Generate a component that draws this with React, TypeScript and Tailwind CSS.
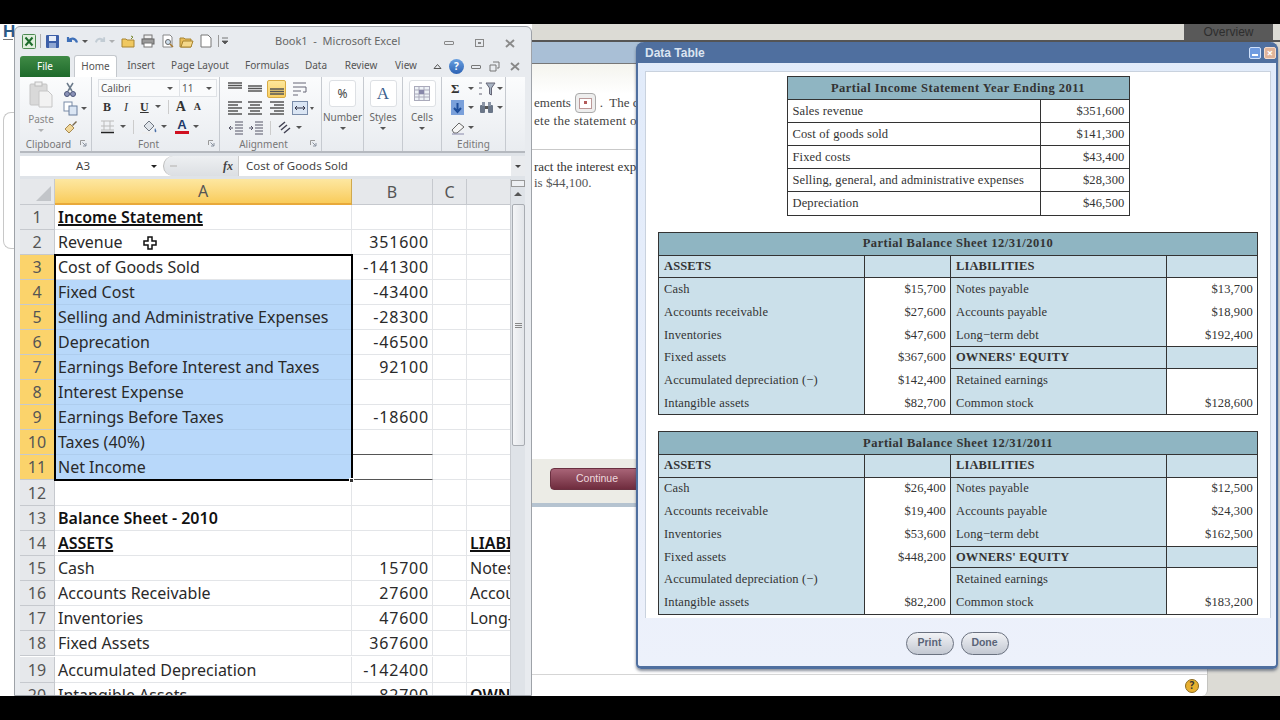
import { ReactNode } from 'react'

const xlFont = "[font-family:'Noto_Sans',sans-serif]"

const rows = [
  { n: 1, a: 'Income Statement', bold: true, under: true },
  { n: 2, a: 'Revenue', b: '351600' },
  { n: 3, a: 'Cost of Goods Sold', b: '-141300', active: true },
  { n: 4, a: 'Fixed Cost', b: '-43400', sel: true },
  { n: 5, a: 'Selling and Administrative Expenses', b: '-28300', sel: true },
  { n: 6, a: 'Deprecation', b: '-46500', sel: true },
  { n: 7, a: 'Earnings Before Interest and Taxes', b: '92100', sel: true },
  { n: 8, a: 'Interest Expense', sel: true },
  { n: 9, a: 'Earnings Before Taxes', b: '-18600', sel: true },
  { n: 10, a: 'Taxes (40%)', sel: true },
  { n: 11, a: 'Net Income', sel: true, boxB: true },
  { n: 12, tall: true },
  { n: 13, a: 'Balance Sheet - 2010', bold: true },
  { n: 14, a: 'ASSETS', bold: true, under: true, d: 'LIABI', dBold: true },
  { n: 15, a: 'Cash', b: '15700', d: 'Notes' },
  { n: 16, a: 'Accounts Receivable', b: '27600', d: 'Accou' },
  { n: 17, a: 'Inventories', b: '47600', d: 'Long-' },
  { n: 18, a: 'Fixed Assets', b: '367600' },
  { n: 19, a: 'Accumulated Depreciation', b: '-142400', taller: true },
  { n: 20, a: 'Intangible Assets', b: '82700', d: 'OWN', dBold: true },
] as {
  n: number
  a?: string
  b?: string
  d?: string
  bold?: boolean
  under?: boolean
  sel?: boolean
  active?: boolean
  boxB?: boolean
  dBold?: boolean
  tall?: boolean
  taller?: boolean
}[]

function Caret({ className = '' }: { className?: string }) {
  return <span className={`inline-block w-0 h-0 border-x-[3px] border-x-transparent border-t-[3px] border-t-[#555] ${className}`} />
}

function Lines({ kind }: { kind: 'top' | 'mid' | 'bot' | 'l' | 'c' | 'r' }) {
  const paths = {
    top: 'M1 2h14M1 4.5h14M1 7h14',
    mid: 'M1 5h14M1 7.5h14M1 10h14',
    bot: 'M1 8h14M1 10.5h14M1 13h14',
    l: 'M1 2h14M1 5h10M1 8h14M1 11h10M1 14h14',
    c: 'M1 2h14M3 5h10M1 8h14M3 11h10M1 14h14',
    r: 'M1 2h14M5 5h10M1 8h14M5 11h10M1 14h14',
  }
  return (
    <svg width="16" height="16" viewBox="0 0 16 16">
      <path d={paths[kind]} stroke="#555" strokeWidth="1.3" fill="none" />
    </svg>
  )
}

function Cell({ className = '', children }: { className?: string; children?: ReactNode }) {
  return <div className={`flex items-center overflow-hidden whitespace-nowrap ${className}`}>{children}</div>
}

function ExcelTitle() {
  return (
    <div className="h-[28px] flex items-center pl-[7px] relative text-[#666]">
      <svg width="14" height="15" viewBox="0 0 14 15">
        <rect x=".5" y=".5" width="13" height="14" rx="1" fill="#dfeedd" stroke="#4d8a52" />
        <path d="M3.5 3.5l7 8M10.5 3.5l-7 8" stroke="#1d6b2c" strokeWidth="2" />
      </svg>
      <span className="w-px h-[14px] bg-[#b0b0b0] ml-[4px] mr-[5px]" />
      <svg width="13" height="13" viewBox="0 0 13 13">
        <rect width="13" height="13" rx="1" fill="#3d5fa8" />
        <rect x="3" y="1" width="7" height="5" fill="#e8eef8" />
        <rect x="3" y="8" width="7" height="5" fill="#8fa6d2" />
      </svg>
      <svg className="ml-[7px]" width="13" height="12" viewBox="0 0 13 12">
        <path d="M2 2v4h4M2.500 6c2-3.500 7-3.500 8.500 1.500" stroke="#3d6fb8" strokeWidth="2.200" fill="none" />
      </svg>
      <Caret className="ml-[3px]" />
      <svg className="ml-[6px]" width="12" height="12" viewBox="0 0 13 12">
        <path d="M11 2v4H7M10.500 6c-2-3.500-7-3.500-8.500 1.500" stroke="#c2ccd4" strokeWidth="2" fill="none" />
      </svg>
      <Caret className="ml-[3px] opacity-40" />
      <svg className="ml-[6px]" width="14" height="13" viewBox="0 0 14 13">
        <path d="M1 4h4l1 1h7v7H1z" fill="#f0c860" stroke="#a88430" />
        <path d="M10 1l2 1-2 2" stroke="#7a8a30" fill="none" />
      </svg>
      <svg className="ml-[6px]" width="14" height="14" viewBox="0 0 14 14">
        <rect x="3" y="1" width="8" height="4" fill="#eee" stroke="#777" />
        <rect x="1" y="5" width="12" height="5" fill="#9a9a9a" stroke="#666" />
        <rect x="3" y="9" width="8" height="4" fill="#fff" stroke="#777" />
      </svg>
      <svg className="ml-[6px]" width="14" height="14" viewBox="0 0 14 14">
        <path d="M2 1h7l2 2v10H2z" fill="#fff" stroke="#888" />
        <circle cx="7" cy="8" r="2.500" fill="#cfe0ee" stroke="#666" />
        <path d="M9 10l3 3" stroke="#a87a30" strokeWidth="1.500" />
      </svg>
      <svg className="ml-[4px]" width="15" height="13" viewBox="0 0 15 13">
        <path d="M1 3h4l1 1h6v8H1z" fill="#e8bc58" stroke="#a88430" />
        <path d="M4 6h10l-2 6H2z" fill="#f5d88a" stroke="#a88430" />
      </svg>
      <svg className="ml-[6px]" width="12" height="14" viewBox="0 0 12 14">
        <path d="M1 1h7l3 3v9H1z" fill="#fff" stroke="#777" />
      </svg>
      <span className="w-px h-[12px] bg-[#999] ml-[6px] mr-[3px]" />
      <svg width="6" height="8" viewBox="0 0 6 8">
        <path d="M0 1h6M0 4h6l-3 3z" stroke="#555" fill="#555" strokeWidth=".8" />
      </svg>
      <span className="ml-[47px] text-[11px] whitespace-nowrap">Book1 &nbsp;-&nbsp; Microsoft Excel</span>
      <div className="ml-auto flex items-center gap-[21px] pr-[16px] pt-[4px]">
        <span className="w-[10px] h-[4px] border border-[#888] rounded-[1px]" />
        <span className="w-[9px] h-[8px] border border-[#888] flex items-center justify-center">
          <span className="w-[3px] h-[2px] border border-[#888]" />
        </span>
        <svg width="10" height="9" viewBox="0 0 10 9">
          <path d="M1 1l8 7M9 1L1 8" stroke="#8b8b8b" strokeWidth="2" />
        </svg>
      </div>
    </div>
  )
}

function ExcelTabs() {
  return (
    <div className="h-[22px] flex items-end text-[10px] text-[#555] whitespace-nowrap">
      <div className="w-[50px] h-[21px] ml-[5px] rounded-t-[3px] bg-gradient-to-b from-[#3f8a45] to-[#1d6a2b] text-white flex items-center justify-center">File</div>
      <div className="w-[43px] h-[22px] ml-[4px] bg-white border border-b-0 border-[#c4c8cd] rounded-t-[3px] flex items-center justify-center">Home</div>
      <span className="w-[34px] ml-[7px] mb-[4px] text-center">Insert</span>
      <span className="w-[68px] ml-[8px] mb-[4px] text-center">Page Layout</span>
      <span className="w-[50px] ml-[8px] mb-[4px] text-center">Formulas</span>
      <span className="w-[30px] ml-[9px] mb-[4px] text-center">Data</span>
      <span className="w-[40px] ml-[10px] mb-[4px] text-center">Review</span>
      <span className="w-[28px] ml-[11px] mb-[4px] text-center">View</span>
      <div className="ml-[13px] mb-[3px] flex items-center">
        <svg width="9" height="7" viewBox="0 0 9 7"><path d="M1 5.500L4.500 1.500 8 5.500z" fill="none" stroke="#555" /></svg>
        <span className="w-[15px] h-[15px] ml-[7px] rounded-full bg-gradient-to-b from-[#6aa0e0] to-[#2c62b4] text-white text-[10px] font-bold flex items-center justify-center">?</span>
        <span className="w-[10px] h-[4px] ml-[7px] border border-[#777] rounded-[1px]" />
        <svg className="ml-[8px]" width="11" height="11" viewBox="0 0 11 11"><path d="M4 1h6v6H8M1 4h6v6H1z" fill="none" stroke="#777" /></svg>
        <svg className="ml-[10px]" width="10" height="9" viewBox="0 0 10 9"><path d="M1 1l8 7M9 1L1 8" stroke="#888" strokeWidth="1.800" /></svg>
      </div>
    </div>
  )
}

function Group({ w, label, launcher, children }: { w: string; label: string; launcher?: boolean; children: ReactNode }) {
  return (
    <div className={`${w} h-full flex flex-col border-r border-[#c6cad0]`}>
      <div className="flex-1 min-h-0">{children}</div>
      <div className={`h-[17px] pt-[4px] flex items-center justify-center text-[10px] text-[#777] relative ${launcher ? 'pr-[14px]' : ''}`}>
        {label}
        {launcher && (
          <svg className="absolute right-[4px] top-[6px]" width="7" height="7" viewBox="0 0 7 7">
            <path d="M.5 5V.5H5" stroke="#999" fill="none" />
            <path d="M2.500 2.500L6 6M6 3v3H3" stroke="#8a93a0" fill="none" />
          </svg>
        )}
      </div>
    </div>
  )
}

function BigButton({ label, children }: { label: string; children: ReactNode }) {
  return (
    <div className="flex flex-col items-center pt-[3px] text-[10px] text-[#666] leading-[12px]">
      <div className="w-[27px] h-[27px] bg-white border border-[#dde0e4] rounded-[3px] flex items-center justify-center">{children}</div>
      <span className="mt-[4px]">{label}</span>
      <Caret className="mt-[4px]" />
    </div>
  )
}

function Ribbon() {
  return (
    <div className="h-[76px] ml-[5px] mr-[6px] flex bg-gradient-to-b from-[#fbfcfd] to-[#e9ecf0] border-b-2 border-[#b5b9bf]">
      <Group w="w-[72px]" label="Clipboard" launcher>
        <div className="flex pl-[8px] pt-[4px]">
          <div className="w-[26px] flex flex-col items-center text-[10px] text-[#888] leading-[12px]">
            <svg width="24" height="27" viewBox="0 0 24 27">
              <rect x="1" y="3" width="17" height="21" rx="1" fill="#d9d9d9" stroke="#c4c4c4" />
              <rect x="6" y="1" width="7" height="4" fill="#eee" stroke="#bbb" />
              <path d="M10 10h9l4 4v12H10z" fill="#f2f2f2" stroke="#c6c6c6" />
            </svg>
            <span className="mt-[5px]">Paste</span>
            <Caret className="mt-[4px] opacity-40" />
          </div>
          <div className="ml-[9px] flex flex-col gap-[4px] pt-[1px]">
            <svg width="14" height="15" viewBox="0 0 14 15">
              <path d="M4 1l5 8M10 1L5 9" stroke="#6b7a8a" strokeWidth="1.500" />
              <circle cx="4" cy="12" r="2.500" fill="#8b93b8" stroke="#4a5578" />
              <circle cx="10" cy="12" r="2.500" fill="#8b93b8" stroke="#4a5578" />
            </svg>
            <div className="flex items-center">
              <svg width="15" height="15" viewBox="0 0 15 15">
                <rect x="1" y="1" width="8" height="9" fill="#fff" stroke="#7a8ca8" />
                <rect x="6" y="5" width="8" height="9" fill="#dbe6f4" stroke="#6b7f9e" />
              </svg>
              <Caret className="ml-[3px]" />
            </div>
            <svg width="15" height="15" viewBox="0 0 15 15">
              <path d="M9 5l4-4 1 1-4 4z" fill="#7a6a50" />
              <path d="M2 9l5-5 4 4-5 5z" fill="#f0d79a" stroke="#a88a50" />
            </svg>
          </div>
        </div>
      </Group>
      <Group w="w-[128px]" label="Font" launcher>
        <div className="pl-[6px] pt-[2px]">
          <div className="flex h-[18px] w-[119px] bg-[#fafbfc] border border-[#dfe2e6] text-[10px] text-[#555]">
            <div className="w-[81px] pl-[2px] flex items-center justify-between pr-[6px] border-r border-[#dfe2e6]">Calibri<Caret /></div>
            <div className="flex-1 pl-[2px] flex items-center justify-between pr-[4px]">11<Caret /></div>
          </div>
          <div className="flex items-center h-[19px] text-[#333] text-[12px]">
            <b className="ml-[5px] font-['Liberation_Serif',serif]">B</b>
            <i className="ml-[13px] font-['Liberation_Serif',serif]">I</i>
            <u className="ml-[12px] font-bold font-['Liberation_Serif',serif]">U</u>
            <Caret className="ml-[6px]" />
            <span className="w-px h-[14px] bg-[#ccc] ml-[7px]" />
            <span className="ml-[7px] text-[14px] font-bold font-['Liberation_Serif',serif]">A</span>
            <span className="ml-[8px] text-[10px] font-bold font-['Liberation_Serif',serif]">A</span>
          </div>
          <div className="flex items-center h-[19px] mt-[1px]">
            <svg className="ml-[2px]" width="15" height="14" viewBox="0 0 15 14">
              <path d="M1 1h13M1 6h13M1 10h13M4 1v9M10 1v9" stroke="#bbb" />
              <path d="M1 12.500h13" stroke="#222" strokeWidth="1.500" />
            </svg>
            <Caret className="ml-[5px]" />
            <span className="w-px h-[14px] bg-[#ccc] ml-[7px]" />
            <svg className="ml-[6px]" width="18" height="16" viewBox="0 0 18 16">
              <path d="M4 7l5-5 5 5-5 5z" fill="#dfe4ea" stroke="#6f7680" />
              <path d="M15 9c1 2 2 3 1 4s-2-1-1-4z" fill="#4a6fa8" />
              <path d="M2 14h13" stroke="#eee" strokeWidth="2" />
            </svg>
            <Caret className="ml-[3px]" />
            <div className="ml-[8px] w-[14px] flex flex-col items-center leading-[12px] text-[13px] font-bold text-[#223a6a] font-['Liberation_Sans',sans-serif]">
              A<span className="w-[14px] h-[3px] bg-[#d01020]" />
            </div>
            <Caret className="ml-[4px]" />
          </div>
        </div>
      </Group>
      <Group w="w-[102px]" label="Alignment" launcher>
        <div className="pl-[7px] pt-[2px] flex flex-col">
          <div className="flex items-center h-[19px] gap-[4px]">
            <Lines kind="top" />
            <Lines kind="mid" />
            <div className="w-[19px] h-[18px] bg-gradient-to-b from-[#fde79a] to-[#f9cf62] border border-[#d8ab45] rounded-[2px] flex items-center justify-center"><Lines kind="bot" /></div>
            <svg className="ml-[2px]" width="16" height="16" viewBox="0 0 16 16"><path d="M1 2h13M1 6h13M1 10h8M1 14h5M14 6v5h-3" stroke="#667" fill="none" /></svg>
          </div>
          <div className="flex items-center h-[19px] gap-[4px]">
            <Lines kind="l" />
            <Lines kind="c" />
            <div className="w-[19px] flex justify-center"><Lines kind="r" /></div>
            <svg className="ml-[2px]" width="22" height="14" viewBox="0 0 22 14"><rect x=".5" y=".5" width="15" height="13" fill="#dbe6f4" stroke="#7a8ca8" /><path d="M3 7h10M5 5L3 7l2 2M11 5l2 2-2 2" stroke="#334" fill="none" /><path d="M18 6h4l-2 3z" fill="#555" /></svg>
          </div>
          <div className="flex items-center h-[19px] mt-[1px]">
            <svg className="ml-[1px]" width="16" height="14" viewBox="0 0 16 14"><path d="M7 1h8M7 4h8M7 7h8M7 10h8M7 13h8M1 7h4M3 5L1 7l2 2" stroke="#556" fill="none" /></svg>
            <svg className="ml-[4px]" width="16" height="14" viewBox="0 0 16 14"><path d="M7 1h8M7 4h8M7 7h8M7 10h8M7 13h8M1 7h4M3 5l2 2-2 2" stroke="#556" fill="none" /></svg>
            <span className="w-px h-[14px] bg-[#ccc] ml-[6px]" />
            <svg className="ml-[6px]" width="16" height="14" viewBox="0 0 16 14"><path d="M2 6l6-5M4 9l6-5M7 12l6-5" stroke="#445" strokeWidth="1.500" /></svg>
            <Caret className="ml-[3px]" />
          </div>
        </div>
      </Group>
      <Group w="w-[42px]" label="">
        <BigButton label="Number"><span className="text-[12px] text-[#444]">%</span></BigButton>
      </Group>
      <Group w="w-[39px]" label="">
        <BigButton label="Styles">
          <span className="text-[17px] leading-[17px] font-['Liberation_Serif',serif] text-[#3c5f8e]">A</span>
        </BigButton>
      </Group>
      <Group w="w-[39px]" label="">
        <BigButton label="Cells">
          <svg width="16" height="15" viewBox="0 0 16 15"><rect x=".5" y=".5" width="15" height="14" fill="#eef2f7" stroke="#aab" /><path d="M.5 4h15M.5 8h15M.5 11h15M5 .5v14M10 .5v14" stroke="#aab" /><rect x="5" y="4" width="5" height="4" fill="#88a" /></svg>
        </BigButton>
      </Group>
      <Group w="w-[64px]" label="Editing">
        <div className="pl-[9px] pt-[2px]">
          <div className="flex items-center h-[19px]">
            <span className="w-[13px] text-[13px] font-bold text-[#333] font-['Liberation_Serif',serif] leading-[13px]">Σ</span>
            <Caret className="ml-[4px]" />
            <svg className="ml-[4px]" width="18" height="14" viewBox="0 0 18 14"><path d="M1 1h3M1 6h3M1 12h3" stroke="#667" /><path d="M8 1h9l-3.500 5v7l-2-1V6z" fill="#a8b4c4" stroke="#667" /></svg>
            <Caret className="ml-[1px]" />
          </div>
          <div className="flex items-center h-[19px]">
            <svg width="13" height="15" viewBox="0 0 13 15"><rect width="13" height="15" fill="#7aa0da" /><path d="M6.500 3v7M3 8l3.500 4L10 8" stroke="#1d4d9a" strokeWidth="2" fill="none" /></svg>
            <Caret className="ml-[4px]" />
            <svg className="ml-[5px]" width="15" height="13" viewBox="0 0 15 13"><rect x="1" y="4" width="5" height="8" rx="1" fill="#6a7688" /><rect x="9" y="4" width="5" height="8" rx="1" fill="#6a7688" /><rect x="3" y="1" width="3" height="4" fill="#8b95a6" /><rect x="9" y="1" width="3" height="4" fill="#8b95a6" /><rect x="6" y="5" width="3" height="3" fill="#555" /></svg>
            <Caret className="ml-[3px]" />
          </div>
          <div className="flex items-center h-[19px] mt-[1px]">
            <svg width="15" height="14" viewBox="0 0 15 14"><path d="M1 9l7-7 5 4-7 6H3z" fill="#f5f5f5" stroke="#666" /><path d="M1 13h12" stroke="#88a" /></svg>
            <Caret className="ml-[2px]" />
          </div>
        </div>
      </Group>
      <div className="flex-1" />
    </div>
  )
}

function FormulaBar() {
  return (
    <div className="h-[26px] ml-[5px] mr-[6px] flex items-center bg-[#dfe3e8] text-[11.500px] text-[#444]">
      <div className="w-[140px] h-[20px] pr-[14px] bg-white flex items-center justify-center relative">
        A3
        <Caret className="absolute right-[3px] top-[9px] !border-t-[#222]" />
      </div>
      <div className="w-[78px] h-[20px] pl-[3px] bg-white flex">
        <div className="w-[75px] h-[20px] rounded-l-[10px] bg-gradient-to-b from-[#eef0f2] to-[#dcdfe3] border-l border-[#bbb] flex items-center justify-between pl-[6px] pr-[5px]">
          <span className="w-[7px] h-[2px] bg-[#ccc]" />
          <i className="font-['Liberation_Serif',serif] text-[12px] font-bold text-[#444]">fx</i>
        </div>
      </div>
      <div className="flex-1 h-[20px] pl-[7px] bg-white flex items-center border-l border-[#ccc]">Cost of Goods Sold</div>
      <div className="w-[14px] h-[20px] bg-[#e9ebee] flex items-center justify-center"><Caret className="!border-t-[#444]" /></div>
    </div>
  )
}

function Sheet() {
  return (
    <div className="flex-1 min-h-0 ml-[5px] mr-[6px] flex overflow-hidden bg-white">
      <div className={`w-[491px] relative overflow-hidden ${xlFont} text-[16px] text-[#2a2a2a]`}>
        <div className="h-[26px] flex bg-[#e6e8eb] text-[#555]">
          <div className="w-[35px] border-r border-b border-[#c6c9ce] flex items-end justify-end">
            <span className="w-0 h-0 mb-[3px] mr-[3px] border-l-[15px] border-l-transparent border-b-[15px] border-b-[#c2c5c9]" />
          </div>
          <Cell className="w-[297px] justify-center bg-gradient-to-b from-[#fde7a0] to-[#f9cc5a] border-r border-[#d0a94e] border-b-2 border-b-[#e8a93a]">A</Cell>
          <Cell className="w-[81px] justify-center border-r border-b border-[#c6c9ce]">B</Cell>
          <Cell className="w-[34px] justify-center border-r border-b border-[#c6c9ce]">C</Cell>
          <Cell className="flex-1 border-b border-[#c6c9ce]" />
        </div>
        {rows.map((r) => (
          <div key={r.n} className={`flex ${r.taller ? 'h-[27px] pt-[1px]' : r.tall ? 'h-[26px]' : 'h-[25px]'}`}>
            <Cell className={`w-[35px] justify-center border-r border-b border-[#c6c9ce] text-[#555] ${r.sel || r.active ? 'bg-[#fbd36b]' : 'bg-[#e6e8eb]'}`}>{r.n}</Cell>
            <Cell className={`w-[297px] pl-[3px] border-r border-b ${r.sel ? 'bg-[#b8d8fa] border-[#aecdee]' : 'border-[#e3e5e8]'} ${r.bold ? 'font-semibold text-[#111]' : ''} ${r.under ? 'underline decoration-2' : ''}`}>{r.a}</Cell>
            <Cell className={`w-[81px] justify-end pr-[3px] tracking-[.8px] border-r border-b border-r-[#e3e5e8] ${r.boxB || r.n === 10 ? 'border-b-[#555]' : 'border-b-[#e3e5e8]'}`}>{r.b}</Cell>
            <Cell className="w-[34px] border-r border-b border-[#e3e5e8]" />
            <Cell className={`flex-1 pl-[3px] border-b border-[#e3e5e8] ${r.dBold ? 'font-semibold text-[#111]' : ''} ${r.n === 14 ? 'underline decoration-2' : ''}`}>{r.d}</Cell>
          </div>
        ))}
        {/* selection outline sits over the cells */}
        <div className="absolute left-[34px] top-[75px] w-[299px] h-[227px] border-2 border-black pointer-events-none" />
        <span className="absolute left-[329px] top-[299px] w-[5px] h-[5px] bg-[#333] border border-white" />
        <svg className="absolute left-[123px] top-[57px]" width="14" height="14" viewBox="0 0 14 14">
          <path d="M5 1h4v4h4v4H9v4H5V9H1V5h4z" fill="#fff" stroke="#111" strokeWidth="1.500" />
        </svg>
      </div>
      <div className="flex-1 bg-[#dfe3e8] flex flex-col items-center border-l border-[#c9ccd1]">
        <span className="w-[14px] h-[7px] bg-[#eef0f3] border border-[#999] mt-[1px]" />
        <span className="w-0 h-0 mt-[5px] border-x-[4px] border-x-transparent border-b-[4px] border-b-[#555]" />
        <div className="w-[13px] h-[242px] mt-[8px] bg-gradient-to-r from-[#f4f5f7] to-[#e2e5e9] border border-[#a8acb2] rounded-[2px] flex flex-col items-center justify-center gap-[1px]">
          <span className="w-[7px] h-px bg-[#888]" />
          <span className="w-[7px] h-px bg-[#888]" />
          <span className="w-[7px] h-px bg-[#888]" />
        </div>
      </div>
    </div>
  )
}

function ExcelWindow() {
  return (
    <div className={`absolute left-[14px] top-[26px] w-[518px] h-[670px] flex flex-col bg-[#e8ebef] border border-[#9ea2a8] rounded-t-[6px] ${xlFont}`}>
      <ExcelTitle />
      <ExcelTabs />
      <Ribbon />
      <FormulaBar />
      <Sheet />
    </div>
  )
}

function Td({ className = '', children, right }: { className?: string; children?: ReactNode; right?: boolean }) {
  return <div className={`flex items-center px-[5px] overflow-hidden whitespace-nowrap ${right ? 'justify-end pr-[4px]' : ''} ${className}`}>{children}</div>
}

const tableFont = "font-['Liberation_Serif',serif] text-[12.500px] tracking-[.13px] text-[#333]"

function IncomeTable() {
  const items = [
    ['Sales revenue', '$351,600'],
    ['Cost of goods sold', '$141,300'],
    ['Fixed costs', '$43,400'],
    ['Selling, general, and administrative expenses', '$28,300'],
    ['Depreciation', '$46,500'],
  ]
  return (
    <div className={`w-[343px] mx-auto border border-[#333] ${tableFont}`}>
      <div className="h-[23px] bg-[#8fb5c2] flex items-center justify-center font-bold tracking-[.5px] border-b border-[#333]">Partial Income Statement Year Ending 2011</div>
      {items.map(([k, v], i) => (
        <div key={k} className={`h-[23px] flex ${i < items.length - 1 ? 'border-b border-[#333]' : ''}`}>
          <Td className="w-[253px] border-r border-[#333]">{k}</Td>
          <Td right className="flex-1">{v}</Td>
        </div>
      ))}
    </div>
  )
}

function BalanceTable({ title, rows }: { title: string; rows: string[][] }) {
  const light = 'bg-[#cbe0ea]'
  const line = 'border-[#333]'
  return (
    <div className={`w-[600px] mx-auto border ${line} ${tableFont}`}>
      <div className={`h-[22.500px] bg-[#8fb5c2] flex items-center justify-center font-bold tracking-[.5px] border-b ${line}`}>{title}</div>
      <div className="grid grid-cols-[206px_86px_216px_1fr] auto-rows-[22.700px]">
        <Td className={`${light} font-bold border-b border-r ${line}`}>ASSETS</Td>
        <Td className={`${light} border-b border-r ${line}`} />
        <Td className={`${light} font-bold border-b border-r ${line}`}>LIABILITIES</Td>
        <Td className={`${light} border-b ${line}`} />
        {rows.map((r, i) => {
          const equity = i === 3
          return [
            <Td key={`a${i}`} className={`${light} border-r ${line}`}>{r[0]}</Td>,
            <Td key={`b${i}`} right className={`border-r ${line}`}>{r[1]}</Td>,
            <Td key={`c${i}`} className={`${light} border-r ${line} ${equity ? 'font-bold border-y' : ''}`}>{r[2]}</Td>,
            <Td key={`d${i}`} right className={equity ? `${light} border-y ${line}` : ''}>{r[3]}</Td>,
          ]
        })}
      </div>
    </div>
  )
}

function DataTable() {
  return (
    <div className="absolute left-[636px] top-[42px] w-[642px] h-[627px] flex flex-col rounded-t-[8px] rounded-b-[5px] bg-gradient-to-b from-[#e1ebfa] to-[#edf1fb] border-2 border-t-0 border-[#4f6f9f] border-b-[3px] shadow-[0_2px_3px_rgba(60,70,90,.6)]">
      <div className="h-[21px] -mx-[2px] rounded-t-[8px] bg-[#4f6f9f] flex items-center pl-[9px] pr-[2px]">
        <span className="font-['Liberation_Sans',sans-serif] text-[12px] font-bold text-[#dbe4f1]">Data Table</span>
        <div className="ml-auto flex gap-[3px]">
          <span className="w-[12px] h-[12px] rounded-[2px] bg-[#6f9be0] border border-[#cfe0fa] flex items-end justify-center pb-[2px]"><span className="w-[6px] h-[2px] bg-white" /></span>
          <span className="w-[12px] h-[12px] rounded-[2px] bg-[#e0b49a] border border-[#f5dccb] flex items-center justify-center text-[11px] leading-[11px] font-bold text-white">×</span>
        </div>
      </div>
      <div className="h-[547px] ml-[7px] mr-[5px] mt-[8px] bg-white border-t border-x border-[#c9d2de] pt-[4px] flex flex-col">
        <IncomeTable />
        <div className="mt-[16px]">
          <BalanceTable
            title="Partial Balance Sheet 12/31/2010"
            rows={[
              ['Cash', '$15,700', 'Notes payable', '$13,700'],
              ['Accounts receivable', '$27,600', 'Accounts payable', '$18,900'],
              ['Inventories', '$47,600', 'Long−term debt', '$192,400'],
              ['Fixed assets', '$367,600', "OWNERS' EQUITY", ''],
              ['Accumulated depreciation (−)', '$142,400', 'Retained earnings', ''],
              ['Intangible assets', '$82,700', 'Common stock', '$128,600'],
            ]}
          />
        </div>
        <div className="mt-[16px]">
          <BalanceTable
            title="Partial Balance Sheet 12/31/2011"
            rows={[
              ['Cash', '$26,400', 'Notes payable', '$12,500'],
              ['Accounts receivable', '$19,400', 'Accounts payable', '$24,300'],
              ['Inventories', '$53,600', 'Long−term debt', '$162,500'],
              ['Fixed assets', '$448,200', "OWNERS' EQUITY", ''],
              ['Accumulated depreciation (−)', '', 'Retained earnings', ''],
              ['Intangible assets', '$82,200', 'Common stock', '$183,200'],
            ]}
          />
        </div>
      </div>
      <div className="flex-1 flex items-center justify-center gap-[7px] pt-[2px] font-['Liberation_Sans',sans-serif] text-[10.500px] font-bold text-[#5a6478]">
        {['Print', 'Done'].map((b) => (
          <span key={b} className="h-[23px] w-[48px] rounded-full bg-gradient-to-b from-[#f2f3f6] to-[#c3c8d2] border border-[#6b7280] flex items-center justify-center">{b}</span>
        ))}
      </div>
    </div>
  )
}

function BackgroundPage() {
  return (
    <div className="flex-1 min-h-0 flex flex-col bg-[#dcdbd5]">
      <div className="h-[16px] shrink-0 flex justify-end pr-[7px]">
        <div className="w-[89px] bg-[#595959] flex items-center justify-center font-['Liberation_Sans',sans-serif] text-[12px] text-[#2e2e2e]">Overview</div>
      </div>
      <div className="h-[2px] shrink-0 bg-[#555]" />
      <div className="flex-1 min-h-0 w-[1208px] flex flex-col bg-white border-r border-[#c4c4c0] rounded-br-[6px] overflow-hidden">
        <div className="h-[22px] shrink-0 bg-[#a9bfd6] border-b border-[#777]" />
        <div className="h-[30px] shrink-0 bg-gradient-to-b from-[#f4f4ee] to-white" />
        <div className="pl-[534px] h-[55px] shrink-0 font-['Liberation_Serif',serif] text-[13px] leading-[18px] text-[#444] whitespace-nowrap">
          <div className="flex items-center h-[18px]">
            ements
            <span className="w-[21px] h-[20px] mx-[4px] rounded-[4px] border border-[#aaa] bg-[#eee] flex items-center justify-center">
              <span className="w-[13px] h-[11px] bg-white border border-[#b99] flex items-start justify-center pt-[2px]"><span className="w-[3px] h-[3px] bg-[#b35b5b]" /></span>
            </span>
            .&nbsp; The c
          </div>
          <div className="tracking-[.3px]">ete the statement o</div>
        </div>
        <div className="h-px shrink-0 bg-[#c9c9c9]" />
        <div className="pl-[534px] pt-[9px] font-['Liberation_Serif',serif] text-[13px] leading-[16px] text-[#333] whitespace-nowrap">
          <div>ract the interest exp</div>
          <div className="text-[#555]">is $44,100.</div>
        </div>
        <div className="h-[268px] shrink-0" />
        <div className="h-[48px] shrink-0 bg-[#ecece6] border-b-4 border-[#b5c3d0] pl-[550px] pt-[9px]">
          <div className="w-[94px] h-[22px] rounded-[4px] border border-[#6a3040] bg-gradient-to-b from-[#a86477] to-[#6f2c3e] flex items-center justify-center font-['Liberation_Sans',sans-serif] text-[10.500px] text-[#eed9de]">Continue</div>
        </div>
        <div className="flex-1" />
        <div className="h-[22px] shrink-0 border-t border-[#d5d5d5] flex justify-end items-center pr-[8px]">
          <span className="w-[14px] h-[14px] rounded-full bg-[#e8b030] border border-[#8a6a20] flex items-center justify-center text-[10px] font-bold text-[#333]">?</span>
        </div>
      </div>
    </div>
  )
}

export default function App() {
  return (
    <div className="relative w-[1280px] h-[720px] flex flex-col bg-black overflow-hidden">
      <div className="h-[24px] shrink-0" />
      <BackgroundPage />
      <div className="h-[24px] shrink-0" />
      {/* page underneath the Excel window, only its left margin shows */}
      <div className="absolute left-0 top-[24px] w-[532px] h-[672px] bg-white">
        <span className="block pl-[3px] font-['Liberation_Sans',sans-serif] font-bold text-[17px] leading-[15px] text-[#2a5a86]">H</span>
        <span className="block w-[10px] h-[1px] ml-[3px] bg-[#777]" />
        <div className="w-[12px] h-[137px] ml-[3px] mt-[72px] border-l border-y border-[#c8c8c8] rounded-l-[8px]" />
      </div>
      <ExcelWindow />
      <DataTable />
    </div>
  )
}
